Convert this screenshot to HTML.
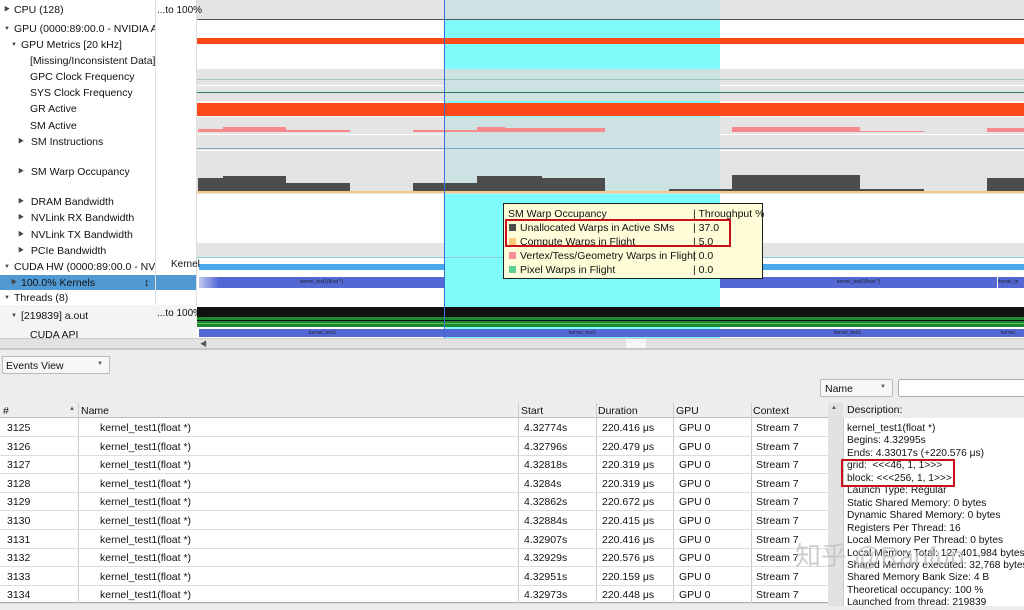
<!DOCTYPE html>
<html><head><meta charset="utf-8"><style>
*{margin:0;padding:0;box-sizing:border-box}
body{width:1024px;height:606px;overflow:hidden;background:#ececec;font-family:"Liberation Sans","Noto Sans CJK SC",sans-serif;font-size:10.5px;color:#111;position:relative}
.a{position:absolute}
.lbl{position:absolute;left:0;width:155px;white-space:nowrap;overflow:hidden;font-size:10.5px;line-height:1}
.tri{display:inline-block;font-size:6px;color:#444;width:10px;vertical-align:2px}
.td{position:absolute;white-space:nowrap;font-size:10.5px}
</style></head><body>
<div class="a" style="left:0;top:0;width:1024px;height:338px;background:#fff"></div>
<div class="a" style="left:197px;top:0;width:827px;height:20px;background:#e4e4e4"></div>
<div class="a" style="left:197px;top:19px;width:827px;height:1px;background:#555"></div>
<div class="a" style="left:197px;top:69px;width:827px;height:32px;background:#e4e4e4"></div>
<div class="a" style="left:197px;top:117px;width:827px;height:77px;background:#e4e4e4"></div>
<div class="a" style="left:197px;top:243px;width:827px;height:14px;background:#e4e4e4"></div>
<div class="a" style="left:197px;top:85px;width:827px;height:1px;background:#fff"></div>
<div class="a" style="left:197px;top:134px;width:827px;height:1px;background:#fff"></div>
<div class="a" style="left:197px;top:150px;width:827px;height:1px;background:#fff"></div>
<div class="a" style="left:445px;top:0;width:275px;height:338px;background:#80fbfb"></div>
<div class="a" style="left:445px;top:0;width:275px;height:19px;background:#cde3e3"></div>
<div class="a" style="left:445px;top:69px;width:275px;height:32px;background:#cde3e3"></div>
<div class="a" style="left:445px;top:117px;width:275px;height:77px;background:#cde3e3"></div>
<div class="a" style="left:445px;top:19px;width:275px;height:1px;background:#555"></div>
<div class="a" style="left:197px;top:79px;width:827px;height:1px;background:#9cc7b4"></div>
<div class="a" style="left:197px;top:92px;width:827px;height:1px;background:#2e7a55"></div>
<div class="a" style="left:197px;top:148px;width:827px;height:1px;background:#7aa8c8"></div>
<div class="a" style="left:197px;top:257px;width:827px;height:1px;background:#8cd"></div>
<div class="a" style="left:197px;top:38px;width:827px;height:6px;background:#fb4a17"></div>
<div class="a" style="left:197px;top:103px;width:827px;height:13px;background:#fb4a17"></div>
<div class="a" style="left:198px;top:129px;width:25px;height:3px;background:#f7898d"></div>
<div class="a" style="left:223px;top:127px;width:63px;height:5px;background:#f7898d"></div>
<div class="a" style="left:286px;top:130px;width:64px;height:2px;background:#f7898d"></div>
<div class="a" style="left:413px;top:130px;width:64px;height:2px;background:#f7898d"></div>
<div class="a" style="left:477px;top:127px;width:28px;height:5px;background:#f7898d"></div>
<div class="a" style="left:505px;top:128px;width:100px;height:4px;background:#f7898d"></div>
<div class="a" style="left:732px;top:127px;width:128px;height:5px;background:#f7898d"></div>
<div class="a" style="left:860px;top:131px;width:64px;height:1px;background:#f7898d"></div>
<div class="a" style="left:987px;top:128px;width:37px;height:4px;background:#f7898d"></div>
<div class="a" style="left:198px;top:178px;width:25px;height:13px;background:#4d4d4d"></div>
<div class="a" style="left:223px;top:176px;width:63px;height:15px;background:#4d4d4d"></div>
<div class="a" style="left:286px;top:183px;width:64px;height:8px;background:#4d4d4d"></div>
<div class="a" style="left:413px;top:183px;width:64px;height:8px;background:#4d4d4d"></div>
<div class="a" style="left:477px;top:176px;width:65px;height:15px;background:#4d4d4d"></div>
<div class="a" style="left:542px;top:178px;width:63px;height:13px;background:#4d4d4d"></div>
<div class="a" style="left:669px;top:189px;width:63px;height:2px;background:#4d4d4d"></div>
<div class="a" style="left:732px;top:175px;width:128px;height:16px;background:#4d4d4d"></div>
<div class="a" style="left:860px;top:189px;width:64px;height:2px;background:#4d4d4d"></div>
<div class="a" style="left:987px;top:178px;width:37px;height:13px;background:#4d4d4d"></div>
<div class="a" style="left:197px;top:191px;width:827px;height:2px;background:#f5c98a"></div>
<div class="a" style="left:199px;top:264px;width:245px;height:6px;background:#4aa9ec"></div>
<div class="a" style="left:720px;top:264px;width:304px;height:6px;background:#4aa9ec"></div>
<div class="a" style="left:155px;top:275px;width:42px;height:15px;background:#5199d2"></div>
<div class="a" style="left:199px;top:277px;width:245px;height:11px;background:linear-gradient(90deg,#c4ccf0,#5468d4 8%,#5468d4);font-size:5px;color:#223;text-align:center;line-height:11px">kernel_test1(float *)</div>
<div class="a" style="left:720px;top:277px;width:277px;height:11px;background:#5468d4;font-size:5px;color:#223;text-align:center;line-height:11px">kernel_test1(float *)</div>
<div class="a" style="left:998px;top:277px;width:26px;height:11px;background:#5468d4;font-size:5px;color:#223;line-height:11px">kernel_te</div>
<div class="a" style="left:197px;top:307px;width:827px;height:10px;background:#111"></div>
<div class="a" style="left:197px;top:317px;width:827px;height:10px;background:#1e8a30"></div>
<div class="a" style="left:197px;top:320px;width:827px;height:1px;background:#111"></div>
<div class="a" style="left:197px;top:323px;width:827px;height:1px;background:#60c060"></div>
<div class="a" style="left:199px;top:329px;width:825px;height:8px;background:#5468d4;font-size:5px;color:#223;line-height:8px"><span class="a" style="left:110px">kernel_test1</span><span class="a" style="left:370px">kernel_test1</span><span class="a" style="left:635px">kernel_test1</span><span class="a" style="left:802px">kernel_</span></div>
<div class="a" style="left:444px;top:0;width:1px;height:338px;background:#3b6fd8"></div>
<div class="a" style="left:155px;top:0;width:1px;height:338px;background:#ddd"></div>
<div class="a" style="left:196px;top:0;width:1px;height:338px;background:#ddd"></div>
<div class="a" style="left:0;top:275px;width:155px;height:15px;background:#5199d2"></div>
<div class="a" style="left:0;top:305px;width:197px;height:22px;background:#f4f4f4"></div>
<div class="a" style="left:0;top:327px;width:197px;height:11px;background:#f4f4f4"></div>
<div class="lbl" style="top:5px;left:4px"><span class="tri">▶</span>CPU (128)</div>
<div class="lbl" style="top:24px;left:4px;width:151px"><span class="tri">▼</span>GPU (0000:89:00.0 - NVIDIA A10</div>
<div class="lbl" style="top:40px;left:11px;width:144px"><span class="tri">▼</span>GPU Metrics [20 kHz]</div>
<div class="lbl" style="top:56px;left:30px">[Missing/Inconsistent Data]</div>
<div class="lbl" style="top:72px;left:30px">GPC Clock Frequency</div>
<div class="lbl" style="top:88px;left:30px">SYS Clock Frequency</div>
<div class="lbl" style="top:104px;left:30px">GR Active</div>
<div class="lbl" style="top:121px;left:30px">SM Active</div>
<div class="lbl" style="top:137px;left:18px"><span class="tri">▶</span>&nbsp;SM Instructions</div>
<div class="lbl" style="top:167px;left:18px"><span class="tri">▶</span>&nbsp;SM Warp Occupancy</div>
<div class="lbl" style="top:197px;left:18px"><span class="tri">▶</span>&nbsp;DRAM Bandwidth</div>
<div class="lbl" style="top:213px;left:18px"><span class="tri">▶</span>&nbsp;NVLink RX Bandwidth</div>
<div class="lbl" style="top:230px;left:18px"><span class="tri">▶</span>&nbsp;NVLink TX Bandwidth</div>
<div class="lbl" style="top:246px;left:18px"><span class="tri">▶</span>&nbsp;PCIe Bandwidth</div>
<div class="lbl" style="top:262px;left:4px;width:151px"><span class="tri">▼</span>CUDA HW (0000:89:00.0 - NVIDI</div>
<div class="lbl" style="top:278px;left:11px;color:#111"><span class="tri">▶</span>100.0% Kernels<span style="position:absolute;left:133px">↕</span></div>
<div class="lbl" style="top:293px;left:4px"><span class="tri">▼</span>Threads (8)</div>
<div class="lbl" style="top:311px;left:11px"><span class="tri">▼</span>[219839] a.out</div>
<div class="lbl" style="top:330px;left:30px">CUDA API</div>
<div class="td" style="left:157px;top:5px;font-size:10px">...to 100%</div>
<div class="td" style="left:171px;top:259px;font-size:10px">Kernel</div>
<div class="td" style="left:157px;top:308px;font-size:10px">...to 100%</div>
<div class="a" style="left:0;top:338px;width:1024px;height:10px;background:#e2e2e2;border-top:1px solid #ccc"></div>
<div class="a" style="left:200px;top:339px;font-size:7px;color:#555">◀</div>
<div class="a" style="left:626px;top:339px;width:20px;height:9px;background:#f6f6f6"></div>
<div class="a" style="left:0;top:348px;width:1024px;height:2px;background:#c8c8c8"></div>
<div class="a" style="left:503px;top:203px;width:260px;height:76px;background:#fffcd8;border:1px solid #222"></div>
<div class="td" style="left:508px;top:208px">SM Warp Occupancy</div>
<div class="td" style="left:693px;top:208px">| Throughput %</div>
<div class="a" style="left:509px;top:224px;width:7px;height:7px;background:#4d4d4d"></div>
<div class="td" style="left:520px;top:222px">Unallocated Warps in Active SMs</div><div class="td" style="left:693px;top:222px">| 37.0</div>
<div class="a" style="left:509px;top:238px;width:7px;height:7px;background:#fbc97a"></div>
<div class="td" style="left:520px;top:236px">Compute Warps in Flight</div><div class="td" style="left:693px;top:236px">| 5.0</div>
<div class="a" style="left:509px;top:252px;width:7px;height:7px;background:#f4919a"></div>
<div class="td" style="left:520px;top:250px">Vertex/Tess/Geometry Warps in Flight</div><div class="td" style="left:693px;top:250px">| 0.0</div>
<div class="a" style="left:509px;top:266px;width:7px;height:7px;background:#5fcf98"></div>
<div class="td" style="left:520px;top:264px">Pixel Warps in Flight</div><div class="td" style="left:693px;top:264px">| 0.0</div>
<div class="a" style="left:505px;top:219px;width:226px;height:28px;border:2px solid #c8101c"></div>
<div class="a" style="left:2px;top:356px;width:108px;height:18px;background:#f7f7f7;border:1px solid #bbb;border-radius:2px;padding:3px 3px">Events View<span style="position:absolute;right:6px;top:4px;font-size:6px;color:#555">▼</span></div>
<div class="a" style="left:820px;top:379px;width:73px;height:18px;background:#f7f7f7;border:1px solid #bbb;border-radius:2px;padding:3px 4px">Name<span style="position:absolute;right:6px;top:4px;font-size:6px;color:#555">▼</span></div>
<div class="a" style="left:898px;top:379px;width:130px;height:18px;background:#fff;border:1px solid #aaa;border-radius:3px"></div>
<div class="a" style="left:0;top:403px;width:828px;height:200px;background:#fff;border-bottom:1px solid #aaa"></div>
<div class="a" style="left:0;top:403px;width:828px;height:15px;background:#eee;border-bottom:1px solid #bbb"></div>
<div class="td" style="left:3px;top:405px">#</div><div class="td" style="left:69px;top:406px;font-size:6px;color:#555">▲</div>
<div class="td" style="left:81px;top:405px">Name</div>
<div class="td" style="left:521px;top:405px">Start</div>
<div class="td" style="left:598px;top:405px">Duration</div>
<div class="td" style="left:676px;top:405px">GPU</div>
<div class="td" style="left:753px;top:405px">Context</div>
<div class="a" style="left:78px;top:403px;width:1px;height:200px;background:#ccc"></div>
<div class="a" style="left:596px;top:403px;width:1px;height:200px;background:#ccc"></div>
<div class="a" style="left:673px;top:403px;width:1px;height:200px;background:#ccc"></div>
<div class="a" style="left:751px;top:403px;width:1px;height:200px;background:#ccc"></div>
<div class="a" style="left:518px;top:403px;width:1px;height:200px;background:#ccc"></div>
<div class="a" style="left:828px;top:403px;width:15px;height:203px;background:#e2e2e2"></div>
<div class="td" style="left:831px;top:405px;font-size:6px;color:#555">▲</div>
<div id="rows"></div>
<div class="a" style="left:843px;top:403px;width:181px;height:15px;background:#ececec"></div>
<div class="td" style="left:847px;top:404px">Description:</div>
<div class="a" style="left:843px;top:418px;width:181px;height:188px;background:#fff;border-left:1px solid #ccc"></div>
<div class="a" style="left:847px;top:423px;line-height:12.45px;font-size:10.2px;white-space:nowrap">kernel_test1(float *)<br>Begins: 4.32995s<br>Ends: 4.33017s (+220.576 μs)<br>grid:&nbsp; &lt;&lt;&lt;46, 1, 1&gt;&gt;&gt;<br>block: &lt;&lt;&lt;256, 1, 1&gt;&gt;&gt;<br>Launch Type: Regular<br>Static Shared Memory: 0 bytes<br>Dynamic Shared Memory: 0 bytes<br>Registers Per Thread: 16<br>Local Memory Per Thread: 0 bytes<br>Local Memory Total: 127,401,984 bytes<br>Shared Memory executed: 32,768 bytes<br>Shared Memory Bank Size: 4 B<br>Theoretical occupancy: 100 %<br>Launched from thread: 219839</div>
<div class="a" style="left:841px;top:459px;width:114px;height:28px;border:2px solid #c8101c"></div>
<div class="a" style="left:795px;top:536px;font-size:26px;color:rgba(190,190,190,0.75);white-space:nowrap">知乎 @Ranfun</div>
<script>
var d=[["3125","4.32774s","220.416 μs"],["3126","4.32796s","220.479 μs"],["3127","4.32818s","220.319 μs"],["3128","4.3284s","220.319 μs"],["3129","4.32862s","220.672 μs"],["3130","4.32884s","220.415 μs"],["3131","4.32907s","220.416 μs"],["3132","4.32929s","220.576 μs"],["3133","4.32951s","220.159 μs"],["3134","4.32973s","220.448 μs"]];
var h="";d.forEach(function(r,i){var y=418+i*18.6;
h+='<div class="a" style="left:0;top:'+(y+18)+'px;width:828px;height:1px;background:#ddd"></div>';
h+='<div class="td" style="left:7px;top:'+(y+4)+'px">'+r[0]+'</div><div class="td" style="left:100px;top:'+(y+4)+'px">kernel_test1(float *)</div><div class="td" style="left:524px;top:'+(y+4)+'px">'+r[1]+'</div><div class="td" style="left:602px;top:'+(y+4)+'px">'+r[2]+'</div><div class="td" style="left:679px;top:'+(y+4)+'px">GPU 0</div><div class="td" style="left:756px;top:'+(y+4)+'px">Stream 7</div>';});
document.getElementById("rows").innerHTML=h;
</script>
</body></html>
